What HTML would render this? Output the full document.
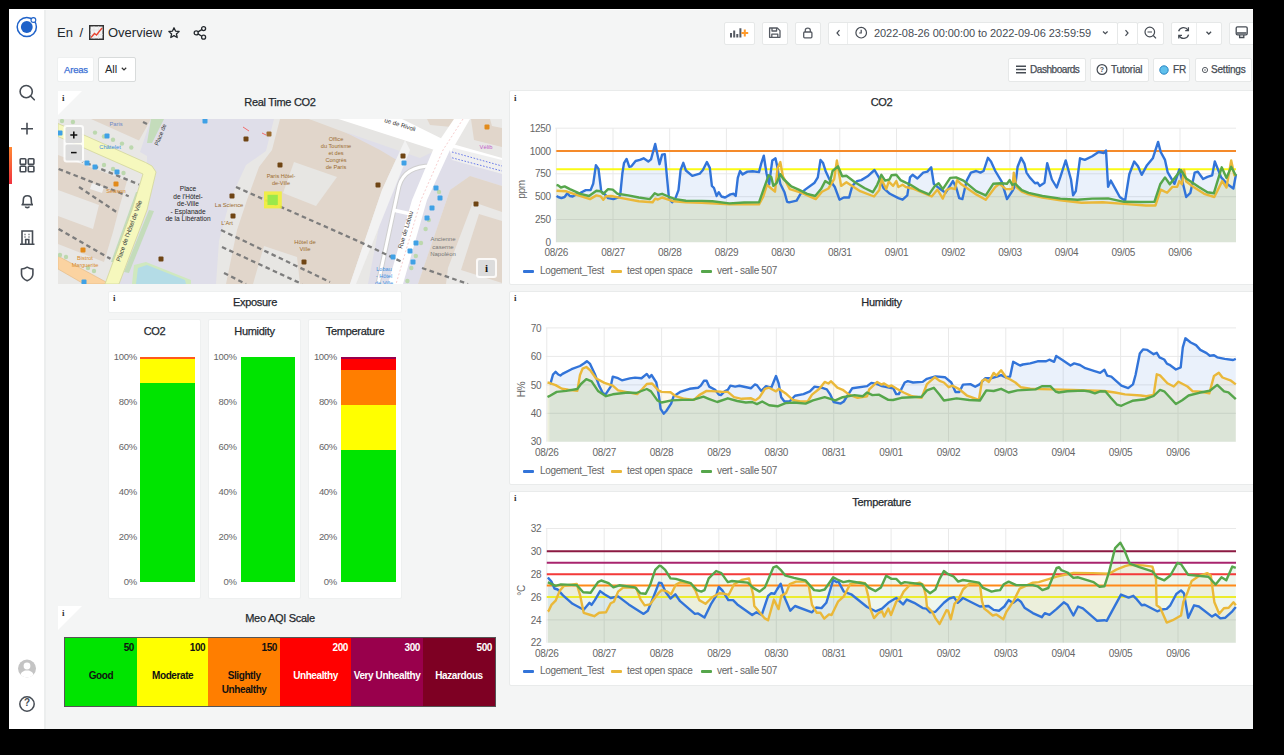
<!DOCTYPE html>
<html><head><meta charset="utf-8">
<style>
*{box-sizing:border-box;margin:0;padding:0}
html,body{width:1284px;height:755px;overflow:hidden;background:#f4f5f5;font-family:"Liberation Sans",sans-serif;color:#24292e}
.a{position:absolute}
.blk{position:absolute;background:#000}
.btn{position:absolute;background:#fff;border:1px solid #e6e8e8;border-radius:2px}
.pnl{position:absolute;background:#fff;border:1px solid #e9ebeb;border-radius:2px}
.ttl{position:absolute;font-size:11px;color:#24292e;text-align:center;white-space:nowrap;-webkit-text-stroke:0.25px #24292e;letter-spacing:-0.3px}
.tri{position:absolute;width:0;height:0;border-top:24px solid #fff;border-right:24px solid transparent}
.ii{position:absolute;font-family:"Liberation Serif",serif;font-weight:bold;font-size:9px;color:#333}
.yl{position:absolute;font-size:10px;color:#666;text-align:right;white-space:nowrap;letter-spacing:-0.3px}
.xl{position:absolute;font-size:10px;color:#666;white-space:nowrap;letter-spacing:-0.3px}
.lg{position:absolute;font-size:10px;color:#666;white-space:nowrap;letter-spacing:-0.35px}
.aq{position:absolute;font-size:10px;font-weight:bold;letter-spacing:-0.4px;white-space:nowrap}
.sb{position:absolute;left:0;width:35px;display:flex;justify-content:center}
</style></head><body>
<!-- sidebar -->
<div class="a" style="left:9px;top:9px;width:37px;height:720px;background:#fff;border-right:2px solid #eceeee"></div>
<div class="a" style="left:44px;top:9px;width:1209px;height:1px;background:#fff"></div>


<!-- sidebar icons -->
<svg class="a" style="left:9px;top:9px" width="35" height="720" viewBox="9 9 35 720" fill="none" stroke="#464c54" stroke-width="1.6">
<circle cx="26.8" cy="27" r="9.6" stroke="#1f62c9" stroke-width="1.5"/>
<circle cx="26.8" cy="27" r="5.9" fill="#1f62c9" stroke="none"/>
<circle cx="33.4" cy="20" r="2.4" fill="#fff" stroke="#1f62c9" stroke-width="1.1"/>
<circle cx="26.2" cy="91.6" r="6.1"/>
<path d="M30.6 96 L34.3 99.8" stroke-linecap="round"/>
<path d="M27 122.8 V134.6 M21 128.7 H33"/>
<rect x="20.2" y="158.8" width="5.6" height="5.6" rx="0.8"/>
<rect x="28.3" y="158.8" width="5.6" height="5.6" rx="0.8"/>
<rect x="20.2" y="166.2" width="5.6" height="5.6" rx="0.8"/>
<rect x="28.3" y="166.2" width="5.6" height="5.6" rx="0.8"/>
<path d="M22.5 204.5 C23.5 203 23.3 201 23.3 200 C23.3 197.5 25 195.8 27.3 195.8 C29.6 195.8 31.3 197.5 31.3 200 C31.3 201 31.1 203 32.2 204.5 Z M21.5 204.8 H33 M25.3 206.5 C25.8 208 28.8 208 29.3 206.5" stroke-linejoin="round"/>
<path d="M22 244 V231 H32.5 V244 M20 244.2 H34.5 M25.7 244 V239.5 H28.8 V244" />
<path d="M24.5 234.5h1 M28.5 234.5h1 M24.5 237h1 M28.5 237h1" stroke-width="1.4"/>
<path d="M27.2 267.2 C25 268.6 23 269 21.5 269 V274 C21.5 277.5 24 279.5 27.2 280.8 C30.4 279.5 32.9 277.5 32.9 274 V269 C31.4 269 29.4 268.6 27.2 267.2 Z" stroke-linejoin="round"/>
<circle cx="27" cy="668.5" r="9" fill="#c4c4c4" stroke="none"/>
<circle cx="27" cy="666" r="3.4" fill="#fff" stroke="none"/>
<path d="M20.5 674.5 C22 671 25 670.6 27 670.6 C29 670.6 32 671 33.5 674.5 C32 676.5 29.5 677.5 27 677.5 C24.5 677.5 22 676.5 20.5 674.5 Z" fill="#fff" stroke="none"/>
<circle cx="27" cy="704" r="7.2" stroke-width="1.5"/>
</svg>
<div class="a" style="left:23px;top:697px;width:8px;font-size:10px;font-weight:bold;color:#464c54;text-align:center">?</div>
<div class="a" style="left:9px;top:147px;width:3px;height:37px;background:linear-gradient(#ff8833,#f0333f)"></div>

<!-- header breadcrumb -->
<div class="a" style="left:57px;top:25px;font-size:13px;color:#24292e;white-space:nowrap">En</div>
<div class="a" style="left:79.5px;top:25px;font-size:13px;color:#24292e">/</div>
<svg class="a" style="left:89px;top:25px" width="15" height="15" viewBox="0 0 15 15">
<rect x="0.75" y="0.75" width="13.5" height="13.5" fill="#f4f4f4" stroke="#333" stroke-width="1.5"/>
<path d="M1 5H14 M1 9.5H14 M5 1V14 M9.5 1V14" stroke="#ddd" stroke-width="0.6"/>
<path d="M2 12.5 L5.5 8.5 L7.5 10 L13 3" fill="none" stroke="#e8432e" stroke-width="1.3"/>
</svg>
<div class="a" style="left:108px;top:25px;font-size:13px;color:#24292e;white-space:nowrap">Overview</div>
<svg class="a" style="left:166px;top:25px" width="16" height="16" viewBox="0 0 16 16"><path d="M8 2.8 L9.5 6.1 L13.1 6.5 L10.4 8.9 L11.2 12.5 L8 10.6 L4.8 12.5 L5.6 8.9 L2.9 6.5 L6.5 6.1 Z" fill="none" stroke="#24292e" stroke-width="1.3" stroke-linejoin="round"/></svg>
<svg class="a" style="left:192px;top:25px" width="16" height="16" viewBox="0 0 16 16" fill="none" stroke="#24292e" stroke-width="1.3"><circle cx="11.6" cy="3.6" r="2"/><circle cx="4.2" cy="7.9" r="2"/><circle cx="11.6" cy="12.2" r="2"/><path d="M6 6.9 L9.8 4.6 M6 8.9 L9.8 11.2"/></svg>

<!-- variables -->
<div class="btn" style="left:57px;top:57px;width:37px;height:25px;border-color:#eef0f0"></div>
<div class="a" style="left:57.5px;top:64px;width:37px;text-align:center;font-size:9.5px;color:#3b6fd4;-webkit-text-stroke:0.25px #3b6fd4;letter-spacing:-0.2px">Areas</div>
<div class="btn" style="left:98px;top:57px;width:38px;height:25px;border-color:#d8dbdb"></div>
<div class="a" style="left:105px;top:63px;font-size:11px;color:#24292e">All</div>
<svg class="a" style="left:120px;top:66px" width="8" height="6" viewBox="0 0 8 6"><path d="M1.8 1.8 L4 3.9 L6.2 1.8" fill="none" stroke="#333" stroke-width="1.2"/></svg>


<!-- top right toolbar -->
<div class="btn" style="left:724px;top:22px;width:31px;height:23px"></div>
<svg class="a" style="left:724px;top:22px" width="31" height="23" viewBox="724 22 31 23">
<path d="M731 37.5V33 M734.2 37.5V30.5 M737.3 37.5V34 M740.4 37.5V28.2" stroke="#555a62" stroke-width="2" fill="none"/>
<path d="M744.8 29.6V36.4 M741.4 33H748.2" stroke="#ff9a2a" stroke-width="2" fill="none"/>
</svg>
<div class="btn" style="left:762px;top:22px;width:26px;height:23px"></div>
<svg class="a" style="left:762px;top:22px" width="26" height="23" viewBox="762 22 26 23" fill="none" stroke="#555a62" stroke-width="1.3" stroke-linejoin="round">
<path d="M769.6 28 H777.3 L780 30.6 V37.3 H769.6 Z"/><path d="M772 28V31H776.6V28 M771.8 37.3V34.2H777.8V37.3"/>
</svg>
<div class="btn" style="left:795px;top:22px;width:26px;height:23px"></div>
<svg class="a" style="left:795px;top:22px" width="26" height="23" viewBox="795 22 26 23" fill="none" stroke="#555a62" stroke-width="1.3">
<rect x="803.7" y="32" width="8.2" height="5.8" rx="1"/><path d="M805.3 32V30.3C805.3 27.5 810.3 27.5 810.3 30.3V32"/>
</svg>
<div class="btn" style="left:828px;top:22px;width:290px;height:23px"></div>
<div class="btn" style="left:1117px;top:22px;width:21px;height:23px"></div>
<div class="btn" style="left:1137px;top:22px;width:27px;height:23px"></div>
<div class="btn" style="left:1229px;top:22px;width:30px;height:23px"></div>
<div class="a" style="left:847px;top:23px;width:1px;height:21px;background:#eceeee"></div>
<svg class="a" style="left:828px;top:22px" width="340" height="23" viewBox="828 22 340 23" fill="none" stroke="#464c54" stroke-width="1.2">
<path d="M839.5 30.2L837 33L839.5 35.8"/>
<circle cx="861.2" cy="32.7" r="5.3"/><path d="M861.2 29.8V33H859.2"/>
<path d="M1103 31.5L1105.3 33.7L1107.6 31.5"/>
<path d="M1125.5 30.2L1128 33L1125.5 35.8"/>
<circle cx="1149.8" cy="32" r="4.8"/><path d="M1147.5 32H1152 M1153.3 35.5L1156 38.3"/>
</svg>
<div class="a" style="left:874px;top:27px;font-size:11px;color:#464c54;white-space:nowrap;letter-spacing:-0.06px">2022-08-26 00:00:00 to 2022-09-06 23:59:59</div>
<div class="btn" style="left:1171px;top:22px;width:51px;height:23px"></div>
<div class="a" style="left:1196px;top:23px;width:1px;height:21px;background:#eceeee"></div>
<svg class="a" style="left:1171px;top:22px" width="82" height="23" viewBox="1171 22 82 23" fill="none" stroke="#464c54" stroke-width="1.3">
<path d="M1178.6 31.2 A5.2 5.2 0 0 1 1188 30.2 M1188.6 34.6 A5.2 5.2 0 0 1 1179 35.6"/>
<path d="M1188.4 27.3V30.6H1185.2 M1178.8 38.6V35.3H1182"/>
<path d="M1206.5 31.7L1208.8 34L1211.1 31.7"/>
<rect x="1236.2" y="26.8" width="11" height="8" rx="1.3"/><path d="M1237 33H1246.5 M1239.6 35V37.5H1243.8V35"/>
</svg>

<!-- second row -->
<div class="btn" style="left:1008px;top:58px;width:78px;height:24px"></div>
<svg class="a" style="left:1015px;top:64px" width="12" height="12" viewBox="0 0 12 12"><path d="M1 2.2H11 M1 5.5H11 M1 8.8H11" stroke="#464c54" stroke-width="1.4"/></svg>
<div class="a" style="left:1030px;top:64px;font-size:10px;color:#464c54;white-space:nowrap;letter-spacing:-0.45px;-webkit-text-stroke:0.25px #464c54">Dashboards</div>
<div class="btn" style="left:1090px;top:58px;width:59px;height:24px"></div>
<svg class="a" style="left:1096px;top:63px" width="12" height="13" viewBox="0 0 12 13"><circle cx="6" cy="6.5" r="4.9" fill="none" stroke="#464c54" stroke-width="1.2"/><text x="6" y="9.2" font-size="7" font-weight="bold" text-anchor="middle" fill="#464c54" font-family="Liberation Sans">?</text></svg>
<div class="a" style="left:1111px;top:64px;font-size:10px;color:#464c54;white-space:nowrap;letter-spacing:-0.2px;-webkit-text-stroke:0.25px #464c54">Tutorial</div>
<div class="btn" style="left:1153px;top:58px;width:37px;height:24px"></div>
<svg class="a" style="left:1158px;top:63px" width="12" height="13" viewBox="0 0 12 13"><circle cx="6" cy="7" r="4.2" fill="#5fc0ec" stroke="#2a86c4" stroke-width="1"/></svg>
<div class="a" style="left:1173px;top:64px;font-size:10px;color:#464c54;white-space:nowrap;letter-spacing:-0.2px;-webkit-text-stroke:0.25px #464c54">FR</div>
<div class="btn" style="left:1195px;top:58px;width:57px;height:24px"></div>
<svg class="a" style="left:1201px;top:65px" width="8" height="10" viewBox="0 0 8 10"><circle cx="4" cy="5" r="2.6" fill="none" stroke="#464c54" stroke-width="0.9"/><circle cx="4" cy="5" r="0.7" fill="#464c54"/></svg>
<div class="a" style="left:1211px;top:64px;font-size:10px;color:#464c54;white-space:nowrap;letter-spacing:-0.2px;-webkit-text-stroke:0.25px #464c54">Settings</div>


<!-- map panel title -->
<div class="tri" style="left:58px;top:91px"></div>
<div class="ii" style="left:62px;top:93px">i</div>
<div class="ttl" style="left:180px;top:96px;width:200px">Real Time CO2</div>
<!-- MAP -->
<svg class="a" style="left:58px;top:119px" width="444" height="165" viewBox="58 119 444 165">
<defs><clipPath id="mc"><rect x="58" y="119" width="444" height="165"/></clipPath></defs><g clip-path="url(#mc)">
<rect x="58" y="119" width="444" height="165" fill="#e8e7e5"/>
<polygon points="91,119 151,119 139,140.5" fill="#e1d6cb" />
<polygon points="58,155 127,181 120,205 113,232 104,262 58,244" fill="#e1d6cb" />
<polygon points="58,190 99,205 93,229 58,216" fill="#e9e8e6" />
<polygon points="92,183 104,187 102,193 90,189" fill="#eeeeee" />
<polygon points="58,256 106,282 106,284 84,284 58,269" fill="#fbd3a1" stroke="#e2b77f" stroke-width="0.6"/>
<polygon points="151,119 274,119 266,151 246,165 230,200 219,241 216,284 119,284 147,210 156,172 147,163 147,156 140,152" fill="#dfdee9" />
<polygon points="151,119 164,119 152,143 147,143" fill="#c4dcbb" />
<polygon points="136,192 140,192 115,262 111,262" fill="#c4dcbb" />
<polygon points="149,210 154,211 129,273 124,272" fill="#c4dcbb" />
<polygon points="58,123.5 145.6,162.5 152,166 156,172 147,210 119,284 105,284 132,210 143,174 58,136.5" fill="#f6f8bd" stroke="#d2d59a" stroke-width="0.8"/>
<polygon points="134,265 146,262 191,280 191,284 132,284" fill="#cfe8bf" />
<polygon points="138,268 147,265 185,280 186,284 136,284" fill="#b4dce6" />
<polygon points="280,119 309,119 405,140 382,190 350,284 226,284 237,230 247,200 259,167 272,150" fill="#e1d6cb" />
<polygon points="294,162 337,177 316,206 283,193" fill="#e7e6e3" />
<polygon points="264,246 297,257 300,284 253,284" fill="#e7e6e3" />
<polygon points="318,190 324,192 322,197 316,195" fill="#e7e6e3" />
<polygon points="309,119 340,119 434.5,150 425,160 405,155" fill="#e6e5e3" />
<polygon points="345,132 420,158 437,150 430,165 415,200 390,284 368,284 386,190 400,162 380,150" fill="#dfdee9" />
<path d="M432 166 C414 166 403 172 399 186 L378 284" stroke="#cfcfcf" stroke-width="5" fill="none"/><path d="M432 166 C414 166 403 172 399 186 L378 284" stroke="#fff" stroke-width="3" fill="none"/><path d="M393 210 L420 216" stroke="#fff" stroke-width="3.5"/>
<polygon points="405,140 410,150 356,284 350,284 382,190" fill="#f2f2f2" />
<polygon points="330,117 402,119 452.6,144 502,158 502,166 434.5,150 340,119.5" fill="#ffffff" />
<polygon points="427,119 454,119 452,127 430,125" fill="#e1d6cb" />
<polygon points="471,119 502,119 502,147 474,140" fill="#e1d6cb" />
<polygon points="490,119 502,119 502,128 492,126" fill="#e9e8e6" />
<polygon points="450,147 502,160 502,174 446,160" fill="#efefef" />
<path d="M452 152 L502 166 M449 157 L502 171" stroke="#5b6ee8" stroke-width="0.9" stroke-dasharray="1.6 1.6" fill="none"/>
<polygon points="454,119 470,119 452,150 430,200 406,284 388,284 412,200 433,150" fill="#ffffff" />
<path d="M463 119 L443 150 L421 200 L396 284" stroke="#f2b9b9" stroke-width="0.7" stroke-dasharray="2 2" fill="none"/>
<polygon points="452,160 502,174 502,186 470,176 450,190 418,284 403,284 427,200 450,150" fill="#dfdee9" />
<polygon points="470,176 502,186 502,284 418,284 450,190" fill="#e1d6cb" />
<polygon points="473,202 502,212 502,221 479,214 461,270 502,283 502,284 446,284 448,268" fill="#e9e8e6" />
<g stroke="#7d7d7d" stroke-width="2.3" stroke-dasharray="4.6 3.4" fill="none">
<path d="M236 187 L360 242 L402 262"/>
<path d="M221 230 L330 282"/>
<path d="M222 247 L302 284"/>
<path d="M224 273 L246 284"/>
<path d="M79 160 L139 184.5"/>
<path d="M58.6 169 L128.7 196.2"/>
<path d="M79 187 L118 213"/>
<path d="M58.6 229 L110.5 258.8"/>
<path d="M143 122 L147 124"/>
<path d="M422 268 L468 284"/>
</g>
<circle cx="72.9" cy="122" r="2.2" fill="#bcd8ae"/>
<circle cx="95" cy="132.6" r="2.2" fill="#bcd8ae"/>
<circle cx="104" cy="136.5" r="2.2" fill="#bcd8ae"/>
<circle cx="113" cy="139.7" r="2.2" fill="#bcd8ae"/>
<circle cx="122" cy="143.6" r="2.2" fill="#bcd8ae"/>
<circle cx="131.3" cy="147.5" r="2.2" fill="#bcd8ae"/>
<circle cx="104" cy="165" r="2.2" fill="#bcd8ae"/>
<circle cx="113" cy="169" r="2.2" fill="#bcd8ae"/>
<circle cx="123.5" cy="173" r="2.2" fill="#bcd8ae"/>
<circle cx="60" cy="255" r="2.2" fill="#bcd8ae"/>
<circle cx="66" cy="257" r="2.2" fill="#bcd8ae"/>
<circle cx="88" cy="268" r="2.2" fill="#bcd8ae"/>
<circle cx="94" cy="271" r="2.2" fill="#bcd8ae"/>
<circle cx="439" cy="192" r="2.2" fill="#bcd8ae"/>
<circle cx="428.8" cy="220" r="2.2" fill="#bcd8ae"/>
<circle cx="425.6" cy="229" r="2.2" fill="#bcd8ae"/>
<circle cx="421" cy="243" r="2.2" fill="#bcd8ae"/>
<circle cx="415.8" cy="256" r="2.2" fill="#bcd8ae"/>
<circle cx="411.3" cy="268" r="2.2" fill="#bcd8ae"/>
<circle cx="407.4" cy="281" r="2.2" fill="#bcd8ae"/>
<circle cx="62" cy="121" r="2.2" fill="#bcd8ae"/>
<rect x="264" y="191.4" width="17.8" height="17" fill="#f1ef3a" fill-opacity="0.9"/>
<rect x="267.5" y="194.8" width="10.3" height="10.2" fill="#9be84a"/>
<text x="188" y="191.0" fill="#222" font-size="6.6" text-anchor="middle" font-family="Liberation Sans">Place</text>
<text x="188" y="198.5" fill="#222" font-size="6.6" text-anchor="middle" font-family="Liberation Sans">de l'Hôtel-</text>
<text x="188" y="206.0" fill="#222" font-size="6.6" text-anchor="middle" font-family="Liberation Sans">de-Ville</text>
<text x="188" y="213.5" fill="#222" font-size="6.6" text-anchor="middle" font-family="Liberation Sans">- Esplanade</text>
<text x="188" y="221.0" fill="#222" font-size="6.6" text-anchor="middle" font-family="Liberation Sans">de la Libération</text>
<text x="229" y="207" fill="#9b6b2e" font-size="5.8" text-anchor="middle" font-family="Liberation Sans">La Science</text>
<text x="227" y="225" fill="#9b6b2e" font-size="5.8" text-anchor="middle" font-family="Liberation Sans">L'Art</text>
<text x="281" y="178" fill="#9b6b2e" font-size="5.5" text-anchor="middle" font-family="Liberation Sans">Paris Hôtel-</text>
<text x="281" y="185" fill="#9b6b2e" font-size="5.5" text-anchor="middle" font-family="Liberation Sans">de-Ville</text>
<text x="336" y="141" fill="#9b6b2e" font-size="5.6" text-anchor="middle" font-family="Liberation Sans">Office</text>
<text x="336" y="148" fill="#9b6b2e" font-size="5.6" text-anchor="middle" font-family="Liberation Sans">du Tourisme</text>
<text x="336" y="155" fill="#9b6b2e" font-size="5.6" text-anchor="middle" font-family="Liberation Sans">et des</text>
<text x="336" y="162" fill="#9b6b2e" font-size="5.6" text-anchor="middle" font-family="Liberation Sans">Congrès</text>
<text x="336" y="169" fill="#9b6b2e" font-size="5.6" text-anchor="middle" font-family="Liberation Sans">de Paris</text>
<text x="305" y="244" fill="#9b6b2e" font-size="5.8" text-anchor="middle" font-family="Liberation Sans">Hôtel de</text>
<text x="305" y="251" fill="#9b6b2e" font-size="5.8" text-anchor="middle" font-family="Liberation Sans">Ville</text>
<text x="443" y="241.0" fill="#777" font-size="6" text-anchor="middle" font-family="Liberation Sans">Ancienne</text>
<text x="443" y="248.5" fill="#777" font-size="6" text-anchor="middle" font-family="Liberation Sans">caserne</text>
<text x="443" y="256.0" fill="#777" font-size="6" text-anchor="middle" font-family="Liberation Sans">Napoléon</text>
<text x="110" y="149" fill="#3b8ee0" font-size="5.8" text-anchor="middle" font-family="Liberation Sans">Châtelet</text>
<text x="116" y="126" fill="#6d88c8" font-size="5.8" text-anchor="middle" font-family="Liberation Sans">Paris</text>
<text x="116" y="193" fill="#d88a2a" font-size="5.8" text-anchor="middle" font-family="Liberation Sans">Season</text>
<text x="85" y="260" fill="#d88a2a" font-size="5.6" text-anchor="middle" font-family="Liberation Sans">Bistrot</text>
<text x="85" y="267" fill="#d88a2a" font-size="5.6" text-anchor="middle" font-family="Liberation Sans">Marguerite</text>
<text x="384" y="271" fill="#3b8ee0" font-size="5.6" text-anchor="middle" font-family="Liberation Sans">Lobau</text>
<text x="384" y="278" fill="#3b8ee0" font-size="5.6" text-anchor="middle" font-family="Liberation Sans">- Hôtel</text>
<text x="384" y="285" fill="#3b8ee0" font-size="5.6" text-anchor="middle" font-family="Liberation Sans">de Ville</text>
<text x="486" y="149" fill="#c05bc8" font-size="5.8" text-anchor="middle" font-family="Liberation Sans">Vélib</text>
<text x="0" y="0" fill="#333" font-size="6.2" font-family="Liberation Sans" transform="translate(120,262) rotate(-70)">Place de l'Hôtel de Ville</text>
<text x="0" y="0" fill="#333" font-size="6.2" font-family="Liberation Sans" transform="translate(402,249) rotate(-73)">Rue de Lobau</text>
<text x="0" y="0" fill="#333" font-size="6.2" font-family="Liberation Sans" transform="translate(384,122) rotate(17)">ue de Rivoli</text>
<text x="0" y="0" fill="#333" font-size="5.8" font-family="Liberation Sans" transform="translate(158,146) rotate(-68)">Place de</text>
<rect x="266.5" y="131.5" width="5" height="5" rx="1" fill="#9b6b2e"/>
<rect x="277.5" y="162.5" width="5" height="5" rx="1" fill="#6f4514"/>
<rect x="301.5" y="259.5" width="5" height="5" rx="1" fill="#6f4514"/>
<rect x="243.5" y="136.5" width="5" height="5" rx="1" fill="#6f4514"/>
<rect x="229.5" y="193.5" width="5" height="5" rx="1" fill="#6f4514"/>
<rect x="230.5" y="213.5" width="5" height="5" rx="1" fill="#6f4514"/>
<rect x="158.5" y="256.5" width="5" height="5" rx="1" fill="#6f4514"/>
<rect x="375.5" y="182.5" width="5" height="5" rx="1" fill="#6f4514"/>
<rect x="400.5" y="153.5" width="5" height="5" rx="1" fill="#6f4514"/>
<rect x="484.5" y="124.5" width="5" height="5" rx="1" fill="#e28a1a"/>
<rect x="473.5" y="201.5" width="5" height="5" rx="1" fill="#6f4514"/>
<rect x="113.5" y="181.5" width="5" height="5" rx="1" fill="#e28a1a"/>
<rect x="80.5" y="247.5" width="5" height="5" rx="1" fill="#e28a1a"/>
<rect x="57.5" y="130.5" width="5" height="5" rx="1" fill="#3fa1e6"/>
<rect x="84.5" y="160.5" width="5" height="5" rx="1" fill="#3fa1e6"/>
<rect x="92.5" y="164.5" width="5" height="5" rx="1" fill="#3fa1e6"/>
<rect x="114.5" y="169.5" width="5" height="5" rx="1" fill="#3fa1e6"/>
<rect x="104.5" y="133.5" width="5" height="5" rx="1" fill="#3fa1e6"/>
<rect x="433.5" y="185.5" width="5" height="5" rx="1" fill="#3fa1e6"/>
<rect x="437.5" y="195.5" width="5" height="5" rx="1" fill="#3fa1e6"/>
<rect x="429.5" y="205.5" width="5" height="5" rx="1" fill="#3fa1e6"/>
<rect x="424.5" y="215.5" width="5" height="5" rx="1" fill="#3fa1e6"/>
<rect x="413.5" y="240.5" width="5" height="5" rx="1" fill="#3fa1e6"/>
<rect x="407.5" y="248.5" width="5" height="5" rx="1" fill="#3fa1e6"/>
<rect x="410.5" y="259.5" width="5" height="5" rx="1" fill="#3fa1e6"/>
<rect x="390.5" y="254.5" width="5" height="5" rx="1" fill="#3fa1e6"/>
<rect x="81.5" y="279.5" width="5" height="5" rx="1" fill="#3fa1e6"/>
<rect x="202.5" y="118.5" width="5" height="5" rx="1" fill="#3fa1e6"/>
<rect x="401.5" y="160.5" width="5" height="5" rx="1" fill="#3fa1e6"/>
<path d="M243 127 L249 131 M262 133 L266 135" stroke="#f36b6b" stroke-width="1"/>
</g>
<rect x="63.5" y="125" width="20.5" height="37.6" rx="3" fill="#ffffff" fill-opacity="0.85"/>
<rect x="65.5" y="127" width="16.5" height="16" rx="1.5" fill="#dcdcdc"/>
<rect x="65.5" y="144.6" width="16.5" height="16" rx="1.5" fill="#dcdcdc"/>
<path d="M73.8 131.5V138.5 M70.3 135H77.3" stroke="#111" stroke-width="1.6"/>
<path d="M71 152.6H76.6" stroke="#111" stroke-width="1.5"/>
<rect x="476" y="258" width="21" height="20" rx="3" fill="#ffffff" fill-opacity="0.85"/>
<rect x="478" y="260" width="17" height="16" rx="1.5" fill="#dcdcdc"/>
<text x="486.5" y="272" fill="#111" font-size="11" font-weight="bold" text-anchor="middle" font-family="Liberation Serif">i</text>
</svg>
<!-- /MAP -->

<!-- exposure -->
<div class="pnl" style="left:108px;top:291px;width:294px;height:22px;border-color:#eef0f0"></div>
<div class="ii" style="left:113px;top:293px">i</div>
<div class="ttl" style="left:155px;top:296px;width:200px">Exposure</div>
<div class="pnl" style="left:108px;top:319px;width:93px;height:280px;border-color:#eef0f0"></div>
<div class="pnl" style="left:208px;top:319px;width:93px;height:280px;border-color:#eef0f0"></div>
<div class="pnl" style="left:308px;top:319px;width:94px;height:280px;border-color:#eef0f0"></div>
<div class="ttl" style="left:108px;top:325px;width:93px">CO2</div>
<div class="ttl" style="left:208px;top:325px;width:93px">Humidity</div>
<div class="ttl" style="left:308px;top:325px;width:94px">Temperature</div>
<!-- CO2 bar -->
<div class="a" style="left:140.4px;top:357px;width:54.6px;height:1.5px;background:#ff5a1a"></div>
<div class="a" style="left:140.4px;top:358.5px;width:54.6px;height:24.5px;background:#ffff00"></div>
<div class="a" style="left:140.4px;top:383px;width:54.6px;height:198.7px;background:#00e400"></div>
<!-- Humidity bar -->
<div class="a" style="left:240.9px;top:357px;width:54.4px;height:224.7px;background:#00e400"></div>
<!-- Temp bar -->
<div class="a" style="left:341px;top:357px;width:54.8px;height:1.5px;background:#99004c"></div>
<div class="a" style="left:341px;top:358.5px;width:54.8px;height:11.5px;background:#ff0000"></div>
<div class="a" style="left:341px;top:370px;width:54.8px;height:35px;background:#ff7e00"></div>
<div class="a" style="left:341px;top:405px;width:54.8px;height:44.7px;background:#ffff00"></div>
<div class="a" style="left:341px;top:449.7px;width:54.8px;height:132px;background:#00e400"></div>
<div class="yl" style="left:96.8px;top:351.0px;width:40px;font-size:9.5px">100%</div>
<div class="yl" style="left:96.8px;top:395.9px;width:40px;font-size:9.5px">80%</div>
<div class="yl" style="left:96.8px;top:440.9px;width:40px;font-size:9.5px">60%</div>
<div class="yl" style="left:96.8px;top:485.8px;width:40px;font-size:9.5px">40%</div>
<div class="yl" style="left:96.8px;top:530.8px;width:40px;font-size:9.5px">20%</div>
<div class="yl" style="left:96.8px;top:575.7px;width:40px;font-size:9.5px">0%</div>
<div class="yl" style="left:196.7px;top:351.0px;width:40px;font-size:9.5px">100%</div>
<div class="yl" style="left:196.7px;top:395.9px;width:40px;font-size:9.5px">80%</div>
<div class="yl" style="left:196.7px;top:440.9px;width:40px;font-size:9.5px">60%</div>
<div class="yl" style="left:196.7px;top:485.8px;width:40px;font-size:9.5px">40%</div>
<div class="yl" style="left:196.7px;top:530.8px;width:40px;font-size:9.5px">20%</div>
<div class="yl" style="left:196.7px;top:575.7px;width:40px;font-size:9.5px">0%</div>
<div class="yl" style="left:297.0px;top:351.0px;width:40px;font-size:9.5px">100%</div>
<div class="yl" style="left:297.0px;top:395.9px;width:40px;font-size:9.5px">80%</div>
<div class="yl" style="left:297.0px;top:440.9px;width:40px;font-size:9.5px">60%</div>
<div class="yl" style="left:297.0px;top:485.8px;width:40px;font-size:9.5px">40%</div>
<div class="yl" style="left:297.0px;top:530.8px;width:40px;font-size:9.5px">20%</div>
<div class="yl" style="left:297.0px;top:575.7px;width:40px;font-size:9.5px">0%</div>

<!-- AQI -->
<div class="tri" style="left:58px;top:606px"></div>
<div class="ii" style="left:62px;top:608px">i</div>
<div class="ttl" style="left:180px;top:612px;width:200px">Meo AQI Scale</div>
<div class="a" style="left:64px;top:637px;width:432px;height:70px;border:1px solid #555;background:#555"></div>
<div class="a" style="left:65px;top:638px;width:72.0px;height:68px;background:#00e400"></div>
<div class="aq" style="left:65px;top:642px;width:69.0px;text-align:right;color:#111">50</div>
<div class="aq" style="left:65px;top:669px;width:72.0px;text-align:center;color:#111;line-height:14px">Good</div>
<div class="a" style="left:137px;top:638px;width:71.3px;height:68px;background:#ffff00"></div>
<div class="aq" style="left:137px;top:642px;width:68.3px;text-align:right;color:#111">100</div>
<div class="aq" style="left:137px;top:669px;width:71.3px;text-align:center;color:#111;line-height:14px">Moderate</div>
<div class="a" style="left:208.3px;top:638px;width:71.7px;height:68px;background:#ff7e00"></div>
<div class="aq" style="left:208.3px;top:642px;width:68.7px;text-align:right;color:#111">150</div>
<div class="aq" style="left:208.3px;top:669px;width:71.7px;text-align:center;color:#111;line-height:14px">Slightly<br>Unhealthy</div>
<div class="a" style="left:280px;top:638px;width:71.0px;height:68px;background:#ff0000"></div>
<div class="aq" style="left:280px;top:642px;width:68.0px;text-align:right;color:#fff">200</div>
<div class="aq" style="left:280px;top:669px;width:71.0px;text-align:center;color:#fff;line-height:14px">Unhealthy</div>
<div class="a" style="left:351px;top:638px;width:72.0px;height:68px;background:#99004c"></div>
<div class="aq" style="left:351px;top:642px;width:69.0px;text-align:right;color:#fff">300</div>
<div class="aq" style="left:351px;top:669px;width:72.0px;text-align:center;color:#fff;line-height:14px">Very Unhealthy</div>
<div class="a" style="left:423px;top:638px;width:72.0px;height:68px;background:#7e0023"></div>
<div class="aq" style="left:423px;top:642px;width:69.0px;text-align:right;color:#fff">500</div>
<div class="aq" style="left:423px;top:669px;width:72.0px;text-align:center;color:#fff;line-height:14px">Hazardous</div>

<!-- CHARTS -->
<div class="pnl" style="left:509px;top:90px;width:750px;height:195px"></div>
<div class="ii" style="left:514px;top:92.5px">i</div>
<div class="ttl" style="left:780px;top:95.6px;width:203px">CO2</div>
<svg class="a" style="left:509px;top:91px" width="744" height="193" viewBox="509 91 744 193">
<path d="M555.3 219.5H1236 M555.3 196.7H1236 M555.3 173.8H1236 M555.3 151.0H1236 M555.3 128.2H1236 M556.3 128.2V242.3 M613.0 128.2V242.3 M669.7 128.2V242.3 M726.4 128.2V242.3 M783.1 128.2V242.3 M839.8 128.2V242.3 M896.5 128.2V242.3 M953.2 128.2V242.3 M1009.9 128.2V242.3 M1066.6 128.2V242.3 M1123.3 128.2V242.3 M1180.0 128.2V242.3" stroke="#e9e9e9" stroke-width="1" fill="none"/>
<path d="M556.5 196.0 L558.2 197.0 L561.4 198.1 L564.6 197.0 L567.3 193.3 L569.9 196.0 L572.6 196.5 L575.2 194.9 L580.5 192.8 L585.8 190.1 L590.6 190.1 L593.2 183.8 L595.9 165.2 L598.5 168.9 L601.2 191.2 L604.9 194.4 L608.1 198.1 L613.4 199.1 L619.2 197.0 L620.3 194.4 L622.4 173.2 L624.0 163.1 L626.6 158.9 L629.3 166.8 L631.4 166.3 L635.6 161.0 L639.9 159.9 L643.6 158.3 L648.3 161.5 L651.0 159.4 L655.2 144.0 L659.5 164.2 L662.1 154.6 L664.8 154.1 L669.0 198.6 L672.2 202.3 L675.3 198.6 L678.5 190.1 L680.6 170.0 L683.3 162.8 L685.9 170.5 L692.3 175.8 L699.7 173.7 L702.9 170.0 L706.9 162.0 L709.8 167.9 L711.9 185.9 L714.0 188.0 L716.6 196.0 L718.8 192.2 L721.4 196.5 L725.1 197.5 L730.4 194.4 L733.6 193.8 L735.7 196.0 L737.8 177.9 L740.0 171.0 L742.6 174.4 L747.4 171.6 L752.7 171.3 L759.0 172.1 L761.2 163.6 L763.8 155.7 L766.5 173.2 L769.1 184.3 L772.3 160.4 L775.5 158.3 L777.1 165.7 L780.3 183.8 L784.5 192.2 L787.1 201.8 L789.2 202.3 L796.6 200.7 L800.8 193.3 L805.1 189.6 L814.6 182.7 L817.8 177.4 L820.5 159.9 L823.1 163.1 L825.8 171.6 L829.5 179.5 L834.8 187.0 L839.5 199.7 L843.8 197.5 L849.1 197.5 L852.3 185.9 L857.0 181.1 L861.3 180.1 L867.6 176.3 L874.5 170.0 L878.2 176.3 L883.5 188.0 L889.9 193.8 L898.4 198.1 L902.6 199.7 L907.3 195.4 L910.0 177.4 L912.6 174.8 L917.4 178.5 L923.2 172.6 L927.4 171.6 L931.2 167.3 L933.8 183.8 L940.2 189.1 L945.5 192.8 L952.9 181.1 L956.1 187.0 L959.2 198.1 L962.4 199.1 L966.7 180.6 L970.9 172.6 L976.2 171.0 L980.4 172.6 L983.6 171.0 L987.9 157.8 L991.0 161.5 L995.3 171.0 L1001.7 181.6 L1007.0 199.1 L1012.3 191.2 L1015.3 185.4 L1017.6 166.8 L1021.2 157.8 L1024.4 163.6 L1026.5 172.6 L1029.7 177.4 L1035.0 183.2 L1037.6 182.7 L1039.7 185.9 L1044.5 182.7 L1047.2 163.1 L1051.9 179.5 L1056.7 187.5 L1060.4 176.9 L1065.7 160.4 L1071.0 179.5 L1073.1 195.4 L1075.8 191.2 L1080.0 158.3 L1084.8 159.9 L1092.2 156.2 L1098.6 152.0 L1103.9 153.0 L1106.0 150.4 L1108.1 186.9 L1110.8 180.6 L1115.5 189.1 L1119.8 197.0 L1125.1 200.7 L1129.3 174.2 L1134.2 161.5 L1138.0 166.3 L1141.7 174.8 L1147.0 165.2 L1152.8 158.3 L1158.1 141.9 L1160.7 152.0 L1165.0 159.9 L1167.6 172.1 L1174.5 183.8 L1179.3 169.5 L1183.0 183.8 L1186.2 197.0 L1190.4 192.8 L1194.7 172.6 L1197.8 171.6 L1203.1 179.0 L1207.4 176.9 L1212.2 175.3 L1214.8 161.5 L1221.2 177.4 L1227.5 184.3 L1233.4 188.5 L1236.0 174.2 L1236.0 242.3 L556.5 242.3 Z" fill="#3274d9" fill-opacity="0.1" stroke="none"/>
<path d="M556.5 190.7 L565.7 191.2 L575.2 194.4 L590.0 199.1 L596.4 195.4 L600.6 196.3 L603.3 199.7 L606.0 196.3 L611.2 196.0 L621.8 198.1 L638.8 201.3 L652.6 202.3 L655.2 198.6 L657.9 199.5 L662.1 197.5 L673.8 201.3 L685.9 202.3 L701.8 202.8 L729.4 204.4 L759.0 204.4 L763.3 196.5 L767.0 184.8 L770.7 188.0 L775.0 191.7 L777.6 167.9 L780.3 162.0 L782.9 176.3 L789.8 189.1 L801.9 192.8 L815.7 199.1 L822.0 191.7 L828.4 188.5 L834.2 179.0 L836.9 160.4 L841.1 185.9 L846.4 182.2 L860.2 191.2 L874.0 196.5 L879.3 190.1 L881.4 179.0 L886.2 189.1 L888.8 181.6 L893.1 185.9 L896.3 181.1 L898.4 187.0 L902.6 184.8 L905.8 187.0 L912.6 188.5 L931.7 196.5 L937.5 189.6 L942.8 198.6 L946.5 190.1 L950.8 188.0 L955.0 189.1 L957.1 180.1 L961.4 184.3 L976.2 194.4 L985.7 199.7 L995.3 187.0 L999.5 183.8 L1005.9 189.1 L1012.3 189.1 L1013.8 172.6 L1016.5 187.0 L1021.8 191.7 L1028.6 194.4 L1042.4 197.5 L1060.4 200.2 L1081.6 202.8 L1102.8 202.3 L1124.0 203.9 L1130.0 204.4 L1145.9 205.5 L1155.4 205.5 L1160.7 189.6 L1167.1 192.8 L1172.4 186.9 L1177.2 186.9 L1179.3 181.1 L1181.9 184.3 L1184.1 170.0 L1186.2 181.6 L1193.6 186.9 L1204.2 193.8 L1214.3 197.0 L1222.2 181.1 L1226.5 187.5 L1231.2 160.4 L1234.4 175.3 L1236.0 174.2 L1236.0 242.3 L556.5 242.3 Z" fill="#eab839" fill-opacity="0.1" stroke="none"/>
<path d="M556.5 185.0 L558.2 185.4 L560.9 187.5 L564.6 186.4 L569.9 189.1 L580.5 193.8 L589.0 196.0 L596.4 190.7 L600.6 191.2 L603.3 193.8 L608.1 189.1 L612.8 189.6 L617.6 193.8 L628.2 195.4 L638.8 197.5 L649.9 199.1 L654.7 193.3 L657.9 194.9 L662.1 193.8 L668.5 196.5 L675.3 199.1 L685.9 200.7 L701.8 200.9 L712.4 201.3 L729.4 203.4 L744.2 202.5 L759.0 202.3 L763.3 190.1 L768.6 175.3 L771.2 176.9 L773.4 185.9 L776.5 183.2 L780.3 174.2 L783.4 179.0 L791.3 186.4 L798.7 189.6 L807.2 193.8 L815.2 196.0 L821.0 189.1 L825.2 181.1 L829.5 183.8 L832.6 171.0 L838.0 166.3 L842.2 176.3 L846.4 175.8 L854.9 182.2 L864.4 188.0 L872.9 192.2 L877.2 184.8 L881.4 174.8 L885.1 180.6 L889.4 179.5 L891.5 175.3 L896.3 174.8 L900.5 180.1 L905.8 182.7 L910.5 184.8 L919.0 190.1 L929.0 194.4 L934.9 185.9 L938.6 183.2 L942.8 189.1 L950.2 177.9 L956.1 177.4 L963.5 180.6 L976.2 191.2 L985.7 195.4 L993.2 183.8 L1001.7 183.2 L1007.0 183.8 L1009.6 180.1 L1012.3 184.8 L1015.3 183.8 L1021.8 190.1 L1028.6 192.8 L1042.4 196.0 L1060.4 198.6 L1077.4 199.7 L1092.2 198.6 L1108.1 198.4 L1124.0 201.8 L1140.6 202.0 L1154.4 201.8 L1160.2 184.3 L1165.0 177.4 L1169.8 184.3 L1180.9 170.0 L1186.2 178.5 L1198.9 186.9 L1207.4 192.2 L1213.8 193.3 L1221.7 167.3 L1226.5 177.9 L1231.2 166.8 L1236.0 175.8 L1236.0 242.3 L556.5 242.3 Z" fill="#56a64b" fill-opacity="0.1" stroke="none"/>
<path d="M556.3 151.0H1236" stroke="#f58a2a" stroke-width="2"/>
<path d="M556.3 169.3H1236" stroke="#fafa14" stroke-width="2"/>
<path d="M556.5 196.0 L558.2 197.0 L561.4 198.1 L564.6 197.0 L567.3 193.3 L569.9 196.0 L572.6 196.5 L575.2 194.9 L580.5 192.8 L585.8 190.1 L590.6 190.1 L593.2 183.8 L595.9 165.2 L598.5 168.9 L601.2 191.2 L604.9 194.4 L608.1 198.1 L613.4 199.1 L619.2 197.0 L620.3 194.4 L622.4 173.2 L624.0 163.1 L626.6 158.9 L629.3 166.8 L631.4 166.3 L635.6 161.0 L639.9 159.9 L643.6 158.3 L648.3 161.5 L651.0 159.4 L655.2 144.0 L659.5 164.2 L662.1 154.6 L664.8 154.1 L669.0 198.6 L672.2 202.3 L675.3 198.6 L678.5 190.1 L680.6 170.0 L683.3 162.8 L685.9 170.5 L692.3 175.8 L699.7 173.7 L702.9 170.0 L706.9 162.0 L709.8 167.9 L711.9 185.9 L714.0 188.0 L716.6 196.0 L718.8 192.2 L721.4 196.5 L725.1 197.5 L730.4 194.4 L733.6 193.8 L735.7 196.0 L737.8 177.9 L740.0 171.0 L742.6 174.4 L747.4 171.6 L752.7 171.3 L759.0 172.1 L761.2 163.6 L763.8 155.7 L766.5 173.2 L769.1 184.3 L772.3 160.4 L775.5 158.3 L777.1 165.7 L780.3 183.8 L784.5 192.2 L787.1 201.8 L789.2 202.3 L796.6 200.7 L800.8 193.3 L805.1 189.6 L814.6 182.7 L817.8 177.4 L820.5 159.9 L823.1 163.1 L825.8 171.6 L829.5 179.5 L834.8 187.0 L839.5 199.7 L843.8 197.5 L849.1 197.5 L852.3 185.9 L857.0 181.1 L861.3 180.1 L867.6 176.3 L874.5 170.0 L878.2 176.3 L883.5 188.0 L889.9 193.8 L898.4 198.1 L902.6 199.7 L907.3 195.4 L910.0 177.4 L912.6 174.8 L917.4 178.5 L923.2 172.6 L927.4 171.6 L931.2 167.3 L933.8 183.8 L940.2 189.1 L945.5 192.8 L952.9 181.1 L956.1 187.0 L959.2 198.1 L962.4 199.1 L966.7 180.6 L970.9 172.6 L976.2 171.0 L980.4 172.6 L983.6 171.0 L987.9 157.8 L991.0 161.5 L995.3 171.0 L1001.7 181.6 L1007.0 199.1 L1012.3 191.2 L1015.3 185.4 L1017.6 166.8 L1021.2 157.8 L1024.4 163.6 L1026.5 172.6 L1029.7 177.4 L1035.0 183.2 L1037.6 182.7 L1039.7 185.9 L1044.5 182.7 L1047.2 163.1 L1051.9 179.5 L1056.7 187.5 L1060.4 176.9 L1065.7 160.4 L1071.0 179.5 L1073.1 195.4 L1075.8 191.2 L1080.0 158.3 L1084.8 159.9 L1092.2 156.2 L1098.6 152.0 L1103.9 153.0 L1106.0 150.4 L1108.1 186.9 L1110.8 180.6 L1115.5 189.1 L1119.8 197.0 L1125.1 200.7 L1129.3 174.2 L1134.2 161.5 L1138.0 166.3 L1141.7 174.8 L1147.0 165.2 L1152.8 158.3 L1158.1 141.9 L1160.7 152.0 L1165.0 159.9 L1167.6 172.1 L1174.5 183.8 L1179.3 169.5 L1183.0 183.8 L1186.2 197.0 L1190.4 192.8 L1194.7 172.6 L1197.8 171.6 L1203.1 179.0 L1207.4 176.9 L1212.2 175.3 L1214.8 161.5 L1221.2 177.4 L1227.5 184.3 L1233.4 188.5 L1236.0 174.2" fill="none" stroke="#3274d9" stroke-width="2.4" stroke-linejoin="round"/>
<path d="M556.5 190.7 L565.7 191.2 L575.2 194.4 L590.0 199.1 L596.4 195.4 L600.6 196.3 L603.3 199.7 L606.0 196.3 L611.2 196.0 L621.8 198.1 L638.8 201.3 L652.6 202.3 L655.2 198.6 L657.9 199.5 L662.1 197.5 L673.8 201.3 L685.9 202.3 L701.8 202.8 L729.4 204.4 L759.0 204.4 L763.3 196.5 L767.0 184.8 L770.7 188.0 L775.0 191.7 L777.6 167.9 L780.3 162.0 L782.9 176.3 L789.8 189.1 L801.9 192.8 L815.7 199.1 L822.0 191.7 L828.4 188.5 L834.2 179.0 L836.9 160.4 L841.1 185.9 L846.4 182.2 L860.2 191.2 L874.0 196.5 L879.3 190.1 L881.4 179.0 L886.2 189.1 L888.8 181.6 L893.1 185.9 L896.3 181.1 L898.4 187.0 L902.6 184.8 L905.8 187.0 L912.6 188.5 L931.7 196.5 L937.5 189.6 L942.8 198.6 L946.5 190.1 L950.8 188.0 L955.0 189.1 L957.1 180.1 L961.4 184.3 L976.2 194.4 L985.7 199.7 L995.3 187.0 L999.5 183.8 L1005.9 189.1 L1012.3 189.1 L1013.8 172.6 L1016.5 187.0 L1021.8 191.7 L1028.6 194.4 L1042.4 197.5 L1060.4 200.2 L1081.6 202.8 L1102.8 202.3 L1124.0 203.9 L1130.0 204.4 L1145.9 205.5 L1155.4 205.5 L1160.7 189.6 L1167.1 192.8 L1172.4 186.9 L1177.2 186.9 L1179.3 181.1 L1181.9 184.3 L1184.1 170.0 L1186.2 181.6 L1193.6 186.9 L1204.2 193.8 L1214.3 197.0 L1222.2 181.1 L1226.5 187.5 L1231.2 160.4 L1234.4 175.3 L1236.0 174.2" fill="none" stroke="#eab839" stroke-width="2.4" stroke-linejoin="round"/>
<path d="M556.5 185.0 L558.2 185.4 L560.9 187.5 L564.6 186.4 L569.9 189.1 L580.5 193.8 L589.0 196.0 L596.4 190.7 L600.6 191.2 L603.3 193.8 L608.1 189.1 L612.8 189.6 L617.6 193.8 L628.2 195.4 L638.8 197.5 L649.9 199.1 L654.7 193.3 L657.9 194.9 L662.1 193.8 L668.5 196.5 L675.3 199.1 L685.9 200.7 L701.8 200.9 L712.4 201.3 L729.4 203.4 L744.2 202.5 L759.0 202.3 L763.3 190.1 L768.6 175.3 L771.2 176.9 L773.4 185.9 L776.5 183.2 L780.3 174.2 L783.4 179.0 L791.3 186.4 L798.7 189.6 L807.2 193.8 L815.2 196.0 L821.0 189.1 L825.2 181.1 L829.5 183.8 L832.6 171.0 L838.0 166.3 L842.2 176.3 L846.4 175.8 L854.9 182.2 L864.4 188.0 L872.9 192.2 L877.2 184.8 L881.4 174.8 L885.1 180.6 L889.4 179.5 L891.5 175.3 L896.3 174.8 L900.5 180.1 L905.8 182.7 L910.5 184.8 L919.0 190.1 L929.0 194.4 L934.9 185.9 L938.6 183.2 L942.8 189.1 L950.2 177.9 L956.1 177.4 L963.5 180.6 L976.2 191.2 L985.7 195.4 L993.2 183.8 L1001.7 183.2 L1007.0 183.8 L1009.6 180.1 L1012.3 184.8 L1015.3 183.8 L1021.8 190.1 L1028.6 192.8 L1042.4 196.0 L1060.4 198.6 L1077.4 199.7 L1092.2 198.6 L1108.1 198.4 L1124.0 201.8 L1140.6 202.0 L1154.4 201.8 L1160.2 184.3 L1165.0 177.4 L1169.8 184.3 L1180.9 170.0 L1186.2 178.5 L1198.9 186.9 L1207.4 192.2 L1213.8 193.3 L1221.7 167.3 L1226.5 177.9 L1231.2 166.8 L1236.0 175.8" fill="none" stroke="#56a64b" stroke-width="2.4" stroke-linejoin="round"/>
</svg>
<div class="yl" style="left:500px;top:236.9px;width:50.8px">0</div>
<div class="yl" style="left:500px;top:214.1px;width:50.8px">250</div>
<div class="yl" style="left:500px;top:191.3px;width:50.8px">500</div>
<div class="yl" style="left:500px;top:168.4px;width:50.8px">750</div>
<div class="yl" style="left:500px;top:145.6px;width:50.8px">1000</div>
<div class="yl" style="left:500px;top:122.8px;width:50.8px">1250</div>
<div class="xl" style="left:536.3px;top:247.3px;width:40px;text-align:center">08/26</div>
<div class="xl" style="left:593.0px;top:247.3px;width:40px;text-align:center">08/27</div>
<div class="xl" style="left:649.7px;top:247.3px;width:40px;text-align:center">08/28</div>
<div class="xl" style="left:706.4px;top:247.3px;width:40px;text-align:center">08/29</div>
<div class="xl" style="left:763.1px;top:247.3px;width:40px;text-align:center">08/30</div>
<div class="xl" style="left:819.8px;top:247.3px;width:40px;text-align:center">08/31</div>
<div class="xl" style="left:876.5px;top:247.3px;width:40px;text-align:center">09/01</div>
<div class="xl" style="left:933.2px;top:247.3px;width:40px;text-align:center">09/02</div>
<div class="xl" style="left:989.9px;top:247.3px;width:40px;text-align:center">09/03</div>
<div class="xl" style="left:1046.6px;top:247.3px;width:40px;text-align:center">09/04</div>
<div class="xl" style="left:1103.3px;top:247.3px;width:40px;text-align:center">09/05</div>
<div class="xl" style="left:1160.0px;top:247.3px;width:40px;text-align:center">09/06</div>
<div class="xl" style="left:501px;top:184.2px;width:40px;text-align:center;transform:rotate(-90deg)">ppm</div>
<div class="a" style="left:523px;top:270px;width:11px;height:3px;border-radius:1px;background:#3274d9"></div>
<div class="lg" style="left:540px;top:265px">Logement_Test</div>
<div class="a" style="left:611px;top:270px;width:11px;height:3px;border-radius:1px;background:#eab839"></div>
<div class="lg" style="left:627px;top:265px">test open space</div>
<div class="a" style="left:701px;top:270px;width:11px;height:3px;border-radius:1px;background:#56a64b"></div>
<div class="lg" style="left:717px;top:265px">vert - salle 507</div>
<div class="pnl" style="left:509px;top:291px;width:750px;height:194px"></div>
<div class="ii" style="left:514px;top:292.5px">i</div>
<div class="ttl" style="left:780px;top:295.6px;width:203px">Humidity</div>
<svg class="a" style="left:509px;top:291px" width="744" height="193" viewBox="509 291 744 193">
<path d="M545.8 413.3H1236 M545.8 384.9H1236 M545.8 356.4H1236 M545.8 327.9H1236 M546.8 327.9V441.8 M604.2 327.9V441.8 M661.6 327.9V441.8 M718.9 327.9V441.8 M776.3 327.9V441.8 M833.7 327.9V441.8 M891.1 327.9V441.8 M948.5 327.9V441.8 M1005.8 327.9V441.8 M1063.2 327.9V441.8 M1120.6 327.9V441.8 M1178.0 327.9V441.8" stroke="#e9e9e9" stroke-width="1" fill="none"/>
<path d="M549.5 384.0 L550.8 382.4 L553.0 374.5 L555.6 371.8 L558.3 374.5 L560.4 375.5 L562.5 373.9 L571.5 369.2 L580.0 366.0 L584.2 363.3 L586.9 361.2 L590.1 363.9 L594.8 373.9 L599.1 385.6 L602.8 393.0 L605.4 394.6 L610.7 386.6 L612.8 376.6 L618.1 378.2 L621.9 380.3 L629.8 378.4 L635.1 377.6 L641.5 378.2 L646.8 373.9 L649.4 377.6 L651.5 375.0 L656.3 382.4 L659.0 396.2 L660.6 408.9 L663.7 413.7 L666.3 411.0 L671.1 403.6 L673.7 396.2 L680.1 391.9 L689.6 388.8 L698.1 387.7 L700.8 385.6 L703.9 380.8 L706.6 380.8 L709.2 386.6 L715.1 389.8 L718.8 394.6 L720.9 395.1 L724.6 391.4 L727.8 389.8 L730.4 385.6 L735.2 386.6 L739.4 385.8 L751.1 388.2 L754.8 384.5 L756.9 385.1 L761.2 390.9 L766.0 386.1 L771.3 387.7 L776.0 376.0 L778.7 383.5 L781.2 397.2 L784.4 401.5 L789.7 401.3 L795.0 395.7 L803.5 394.1 L809.9 391.4 L814.6 386.6 L821.5 387.7 L826.8 389.3 L830.0 394.1 L833.7 402.0 L840.6 403.6 L843.8 401.5 L847.5 395.7 L852.3 388.2 L867.1 386.1 L871.4 382.9 L876.7 384.0 L882.0 386.1 L891.5 388.2 L893.0 387.8 L896.2 394.1 L898.8 394.1 L904.7 382.5 L907.8 381.1 L913.1 382.5 L922.7 381.9 L926.9 378.8 L935.4 376.4 L944.9 377.2 L951.3 382.5 L955.5 392.0 L959.3 392.0 L963.0 384.6 L970.4 384.1 L975.2 386.7 L979.9 384.1 L985.2 378.2 L991.6 378.2 L996.9 376.6 L1001.1 375.1 L1005.4 377.2 L1010.1 376.6 L1013.2 361.8 L1020.1 365.5 L1022.8 364.5 L1030.2 363.4 L1037.6 361.3 L1046.1 361.3 L1049.3 359.7 L1054.1 361.8 L1056.2 356.0 L1062.0 359.7 L1070.5 365.5 L1074.2 363.4 L1080.0 365.0 L1085.3 368.2 L1093.8 370.8 L1100.2 372.9 L1104.4 369.8 L1107.1 375.6 L1111.3 376.6 L1121.4 385.7 L1128.2 388.1 L1133.0 384.4 L1135.6 374.8 L1139.8 353.6 L1143.0 349.4 L1147.3 349.9 L1153.6 354.2 L1156.8 352.8 L1159.5 357.3 L1164.2 359.5 L1166.9 363.7 L1169.5 364.8 L1175.9 369.5 L1180.7 367.4 L1182.8 347.3 L1185.4 338.3 L1190.7 342.5 L1196.0 345.1 L1200.3 349.9 L1206.6 353.1 L1209.8 355.7 L1214.0 355.2 L1217.2 357.3 L1224.7 358.9 L1233.1 360.0 L1235.8 358.9 L1235.8 441.8 L549.5 441.8 Z" fill="#3274d9" fill-opacity="0.1" stroke="none"/>
<path d="M547.5 382.5 L549.2 382.9 L555.6 385.1 L562.0 388.8 L568.3 389.8 L577.3 390.9 L580.0 375.0 L582.6 368.6 L586.3 367.0 L590.6 370.7 L595.9 378.2 L604.4 382.9 L612.8 385.6 L618.1 390.4 L625.6 391.9 L637.2 394.1 L642.5 388.8 L646.8 384.0 L652.1 383.5 L658.4 390.4 L661.6 391.9 L670.5 392.2 L675.8 396.2 L684.3 398.8 L693.9 399.9 L699.2 395.1 L706.6 390.9 L716.1 391.4 L721.4 391.7 L727.8 391.9 L734.1 397.2 L741.6 398.8 L751.1 398.3 L755.4 400.4 L759.6 397.2 L764.9 388.8 L769.1 387.7 L776.0 391.4 L778.7 388.8 L786.5 394.1 L792.9 399.9 L800.3 401.5 L807.7 401.5 L812.0 394.6 L819.4 388.8 L824.7 381.9 L828.4 383.5 L831.1 381.3 L837.4 387.7 L842.7 389.8 L849.1 394.6 L857.6 397.8 L867.1 396.2 L869.2 389.3 L877.2 381.9 L881.4 384.5 L884.1 383.5 L888.8 386.6 L891.5 385.4 L896.8 388.8 L903.6 392.5 L912.1 396.3 L921.6 397.8 L926.9 384.1 L934.9 377.2 L939.6 380.9 L943.9 382.5 L948.7 387.2 L952.4 385.7 L958.7 388.8 L967.2 395.7 L978.9 400.0 L982.0 380.9 L985.2 379.3 L988.9 381.9 L993.7 372.9 L996.4 375.6 L1001.1 370.3 L1006.4 377.7 L1009.0 378.8 L1015.4 382.5 L1020.7 387.2 L1030.2 388.8 L1051.4 389.4 L1072.6 389.9 L1104.4 391.0 L1115.0 392.5 L1125.0 394.4 L1140.9 395.5 L1146.2 396.2 L1153.6 395.0 L1156.8 374.3 L1160.0 375.4 L1167.4 383.3 L1173.8 386.5 L1178.5 381.7 L1187.5 386.5 L1192.8 391.3 L1201.3 391.8 L1209.3 393.4 L1214.0 375.9 L1218.8 372.7 L1222.5 377.5 L1231.0 380.7 L1235.8 384.4 L1235.8 441.8 L547.5 441.8 Z" fill="#eab839" fill-opacity="0.1" stroke="none"/>
<path d="M547.5 397.0 L549.2 396.2 L556.7 391.9 L566.2 390.9 L577.3 389.0 L581.0 384.0 L586.3 379.2 L591.6 381.3 L598.0 390.9 L606.0 396.2 L612.8 394.3 L627.7 392.5 L636.2 393.0 L646.8 389.0 L651.0 391.4 L657.4 400.4 L661.6 402.5 L671.6 400.4 L682.2 399.9 L692.8 399.9 L703.4 396.7 L708.7 398.8 L717.2 402.0 L727.8 398.3 L737.3 401.0 L745.8 402.5 L752.2 402.0 L756.9 404.1 L762.2 401.5 L769.1 405.2 L777.6 406.3 L785.5 403.1 L794.0 402.5 L805.6 403.6 L813.0 400.4 L824.7 397.2 L835.3 400.4 L842.7 397.2 L854.4 395.1 L862.9 396.2 L867.1 392.5 L872.4 395.1 L878.8 394.6 L888.3 399.9 L893.0 400.0 L901.5 397.8 L921.6 396.8 L926.9 390.4 L933.8 387.8 L939.6 394.7 L943.9 400.5 L956.6 398.4 L969.3 400.0 L979.9 400.5 L986.3 390.4 L993.7 391.0 L1001.1 388.8 L1008.6 392.5 L1017.5 390.4 L1035.5 389.4 L1041.9 386.2 L1050.3 386.2 L1055.6 391.5 L1058.8 392.5 L1067.3 391.3 L1083.2 390.6 L1089.6 391.5 L1094.9 393.4 L1100.2 391.3 L1105.5 391.5 L1110.8 397.8 L1117.1 404.7 L1121.4 405.8 L1125.0 404.0 L1132.4 400.8 L1145.1 399.2 L1153.6 396.0 L1160.0 389.9 L1164.2 391.3 L1175.9 404.0 L1182.2 400.3 L1188.6 395.5 L1199.2 392.8 L1209.8 390.7 L1217.2 384.9 L1224.1 391.3 L1228.4 392.3 L1235.8 399.2 L1235.8 441.8 L547.5 441.8 Z" fill="#56a64b" fill-opacity="0.1" stroke="none"/>
<path d="M549.5 384.0 L550.8 382.4 L553.0 374.5 L555.6 371.8 L558.3 374.5 L560.4 375.5 L562.5 373.9 L571.5 369.2 L580.0 366.0 L584.2 363.3 L586.9 361.2 L590.1 363.9 L594.8 373.9 L599.1 385.6 L602.8 393.0 L605.4 394.6 L610.7 386.6 L612.8 376.6 L618.1 378.2 L621.9 380.3 L629.8 378.4 L635.1 377.6 L641.5 378.2 L646.8 373.9 L649.4 377.6 L651.5 375.0 L656.3 382.4 L659.0 396.2 L660.6 408.9 L663.7 413.7 L666.3 411.0 L671.1 403.6 L673.7 396.2 L680.1 391.9 L689.6 388.8 L698.1 387.7 L700.8 385.6 L703.9 380.8 L706.6 380.8 L709.2 386.6 L715.1 389.8 L718.8 394.6 L720.9 395.1 L724.6 391.4 L727.8 389.8 L730.4 385.6 L735.2 386.6 L739.4 385.8 L751.1 388.2 L754.8 384.5 L756.9 385.1 L761.2 390.9 L766.0 386.1 L771.3 387.7 L776.0 376.0 L778.7 383.5 L781.2 397.2 L784.4 401.5 L789.7 401.3 L795.0 395.7 L803.5 394.1 L809.9 391.4 L814.6 386.6 L821.5 387.7 L826.8 389.3 L830.0 394.1 L833.7 402.0 L840.6 403.6 L843.8 401.5 L847.5 395.7 L852.3 388.2 L867.1 386.1 L871.4 382.9 L876.7 384.0 L882.0 386.1 L891.5 388.2 L893.0 387.8 L896.2 394.1 L898.8 394.1 L904.7 382.5 L907.8 381.1 L913.1 382.5 L922.7 381.9 L926.9 378.8 L935.4 376.4 L944.9 377.2 L951.3 382.5 L955.5 392.0 L959.3 392.0 L963.0 384.6 L970.4 384.1 L975.2 386.7 L979.9 384.1 L985.2 378.2 L991.6 378.2 L996.9 376.6 L1001.1 375.1 L1005.4 377.2 L1010.1 376.6 L1013.2 361.8 L1020.1 365.5 L1022.8 364.5 L1030.2 363.4 L1037.6 361.3 L1046.1 361.3 L1049.3 359.7 L1054.1 361.8 L1056.2 356.0 L1062.0 359.7 L1070.5 365.5 L1074.2 363.4 L1080.0 365.0 L1085.3 368.2 L1093.8 370.8 L1100.2 372.9 L1104.4 369.8 L1107.1 375.6 L1111.3 376.6 L1121.4 385.7 L1128.2 388.1 L1133.0 384.4 L1135.6 374.8 L1139.8 353.6 L1143.0 349.4 L1147.3 349.9 L1153.6 354.2 L1156.8 352.8 L1159.5 357.3 L1164.2 359.5 L1166.9 363.7 L1169.5 364.8 L1175.9 369.5 L1180.7 367.4 L1182.8 347.3 L1185.4 338.3 L1190.7 342.5 L1196.0 345.1 L1200.3 349.9 L1206.6 353.1 L1209.8 355.7 L1214.0 355.2 L1217.2 357.3 L1224.7 358.9 L1233.1 360.0 L1235.8 358.9" fill="none" stroke="#3274d9" stroke-width="2.4" stroke-linejoin="round"/>
<path d="M547.5 382.5 L549.2 382.9 L555.6 385.1 L562.0 388.8 L568.3 389.8 L577.3 390.9 L580.0 375.0 L582.6 368.6 L586.3 367.0 L590.6 370.7 L595.9 378.2 L604.4 382.9 L612.8 385.6 L618.1 390.4 L625.6 391.9 L637.2 394.1 L642.5 388.8 L646.8 384.0 L652.1 383.5 L658.4 390.4 L661.6 391.9 L670.5 392.2 L675.8 396.2 L684.3 398.8 L693.9 399.9 L699.2 395.1 L706.6 390.9 L716.1 391.4 L721.4 391.7 L727.8 391.9 L734.1 397.2 L741.6 398.8 L751.1 398.3 L755.4 400.4 L759.6 397.2 L764.9 388.8 L769.1 387.7 L776.0 391.4 L778.7 388.8 L786.5 394.1 L792.9 399.9 L800.3 401.5 L807.7 401.5 L812.0 394.6 L819.4 388.8 L824.7 381.9 L828.4 383.5 L831.1 381.3 L837.4 387.7 L842.7 389.8 L849.1 394.6 L857.6 397.8 L867.1 396.2 L869.2 389.3 L877.2 381.9 L881.4 384.5 L884.1 383.5 L888.8 386.6 L891.5 385.4 L896.8 388.8 L903.6 392.5 L912.1 396.3 L921.6 397.8 L926.9 384.1 L934.9 377.2 L939.6 380.9 L943.9 382.5 L948.7 387.2 L952.4 385.7 L958.7 388.8 L967.2 395.7 L978.9 400.0 L982.0 380.9 L985.2 379.3 L988.9 381.9 L993.7 372.9 L996.4 375.6 L1001.1 370.3 L1006.4 377.7 L1009.0 378.8 L1015.4 382.5 L1020.7 387.2 L1030.2 388.8 L1051.4 389.4 L1072.6 389.9 L1104.4 391.0 L1115.0 392.5 L1125.0 394.4 L1140.9 395.5 L1146.2 396.2 L1153.6 395.0 L1156.8 374.3 L1160.0 375.4 L1167.4 383.3 L1173.8 386.5 L1178.5 381.7 L1187.5 386.5 L1192.8 391.3 L1201.3 391.8 L1209.3 393.4 L1214.0 375.9 L1218.8 372.7 L1222.5 377.5 L1231.0 380.7 L1235.8 384.4" fill="none" stroke="#eab839" stroke-width="2.4" stroke-linejoin="round"/>
<path d="M547.5 397.0 L549.2 396.2 L556.7 391.9 L566.2 390.9 L577.3 389.0 L581.0 384.0 L586.3 379.2 L591.6 381.3 L598.0 390.9 L606.0 396.2 L612.8 394.3 L627.7 392.5 L636.2 393.0 L646.8 389.0 L651.0 391.4 L657.4 400.4 L661.6 402.5 L671.6 400.4 L682.2 399.9 L692.8 399.9 L703.4 396.7 L708.7 398.8 L717.2 402.0 L727.8 398.3 L737.3 401.0 L745.8 402.5 L752.2 402.0 L756.9 404.1 L762.2 401.5 L769.1 405.2 L777.6 406.3 L785.5 403.1 L794.0 402.5 L805.6 403.6 L813.0 400.4 L824.7 397.2 L835.3 400.4 L842.7 397.2 L854.4 395.1 L862.9 396.2 L867.1 392.5 L872.4 395.1 L878.8 394.6 L888.3 399.9 L893.0 400.0 L901.5 397.8 L921.6 396.8 L926.9 390.4 L933.8 387.8 L939.6 394.7 L943.9 400.5 L956.6 398.4 L969.3 400.0 L979.9 400.5 L986.3 390.4 L993.7 391.0 L1001.1 388.8 L1008.6 392.5 L1017.5 390.4 L1035.5 389.4 L1041.9 386.2 L1050.3 386.2 L1055.6 391.5 L1058.8 392.5 L1067.3 391.3 L1083.2 390.6 L1089.6 391.5 L1094.9 393.4 L1100.2 391.3 L1105.5 391.5 L1110.8 397.8 L1117.1 404.7 L1121.4 405.8 L1125.0 404.0 L1132.4 400.8 L1145.1 399.2 L1153.6 396.0 L1160.0 389.9 L1164.2 391.3 L1175.9 404.0 L1182.2 400.3 L1188.6 395.5 L1199.2 392.8 L1209.8 390.7 L1217.2 384.9 L1224.1 391.3 L1228.4 392.3 L1235.8 399.2" fill="none" stroke="#56a64b" stroke-width="2.4" stroke-linejoin="round"/>
</svg>
<div class="yl" style="left:500px;top:436.4px;width:41.3px">30</div>
<div class="yl" style="left:500px;top:407.9px;width:41.3px">40</div>
<div class="yl" style="left:500px;top:379.5px;width:41.3px">50</div>
<div class="yl" style="left:500px;top:351.0px;width:41.3px">60</div>
<div class="yl" style="left:500px;top:322.5px;width:41.3px">70</div>
<div class="xl" style="left:526.8px;top:446.8px;width:40px;text-align:center">08/26</div>
<div class="xl" style="left:584.2px;top:446.8px;width:40px;text-align:center">08/27</div>
<div class="xl" style="left:641.6px;top:446.8px;width:40px;text-align:center">08/28</div>
<div class="xl" style="left:698.9px;top:446.8px;width:40px;text-align:center">08/29</div>
<div class="xl" style="left:756.3px;top:446.8px;width:40px;text-align:center">08/30</div>
<div class="xl" style="left:813.7px;top:446.8px;width:40px;text-align:center">08/31</div>
<div class="xl" style="left:871.1px;top:446.8px;width:40px;text-align:center">09/01</div>
<div class="xl" style="left:928.5px;top:446.8px;width:40px;text-align:center">09/02</div>
<div class="xl" style="left:985.8px;top:446.8px;width:40px;text-align:center">09/03</div>
<div class="xl" style="left:1043.2px;top:446.8px;width:40px;text-align:center">09/04</div>
<div class="xl" style="left:1100.6px;top:446.8px;width:40px;text-align:center">09/05</div>
<div class="xl" style="left:1158.0px;top:446.8px;width:40px;text-align:center">09/06</div>
<div class="xl" style="left:501px;top:383.9px;width:40px;text-align:center;transform:rotate(-90deg)">H%</div>
<div class="a" style="left:523px;top:470px;width:11px;height:3px;border-radius:1px;background:#3274d9"></div>
<div class="lg" style="left:540px;top:465px">Logement_Test</div>
<div class="a" style="left:611px;top:470px;width:11px;height:3px;border-radius:1px;background:#eab839"></div>
<div class="lg" style="left:627px;top:465px">test open space</div>
<div class="a" style="left:701px;top:470px;width:11px;height:3px;border-radius:1px;background:#56a64b"></div>
<div class="lg" style="left:717px;top:465px">vert - salle 507</div>
<div class="pnl" style="left:509px;top:491px;width:750px;height:195px"></div>
<div class="ii" style="left:514px;top:492.5px">i</div>
<div class="ttl" style="left:780px;top:495.6px;width:203px">Temperature</div>
<svg class="a" style="left:509px;top:491px" width="744" height="193" viewBox="509 491 744 193">
<path d="M545.8 619.9H1236 M545.8 597.0H1236 M545.8 574.2H1236 M545.8 551.3H1236 M545.8 528.5H1236 M546.8 528.5V642.7 M604.2 528.5V642.7 M661.6 528.5V642.7 M718.9 528.5V642.7 M776.3 528.5V642.7 M833.7 528.5V642.7 M891.1 528.5V642.7 M948.5 528.5V642.7 M1005.8 528.5V642.7 M1063.2 528.5V642.7 M1120.6 528.5V642.7 M1178.0 528.5V642.7" stroke="#e9e9e9" stroke-width="1" fill="none"/>
<path d="M547.8 577.5 L548.7 578.4 L551.4 581.6 L554.5 588.5 L557.7 589.5 L563.0 595.4 L572.6 603.8 L583.7 609.7 L589.5 602.8 L591.6 604.9 L594.8 600.1 L600.1 591.1 L604.4 594.3 L610.7 598.0 L618.1 596.4 L628.7 604.4 L643.6 613.9 L647.8 610.7 L653.1 598.0 L659.0 582.6 L661.6 583.2 L665.8 592.2 L670.5 598.5 L675.3 594.3 L680.1 601.2 L694.9 613.9 L698.1 613.4 L704.5 617.6 L710.8 604.4 L716.1 595.9 L718.8 586.9 L722.5 590.6 L728.3 600.1 L733.1 600.1 L737.3 604.4 L752.2 615.0 L756.4 612.3 L761.7 615.0 L768.1 595.9 L771.3 593.2 L774.4 593.8 L777.0 589.5 L780.7 583.7 L784.4 597.0 L790.3 610.7 L795.0 606.0 L812.0 612.3 L816.2 607.5 L821.5 608.1 L826.3 602.8 L833.2 580.0 L836.4 582.1 L838.5 581.6 L843.8 591.6 L851.2 594.3 L867.1 607.0 L875.6 611.3 L882.0 608.6 L888.3 602.8 L891.5 600.7 L896.2 598.0 L903.1 604.4 L906.8 599.6 L914.2 602.8 L922.7 608.1 L926.4 608.6 L930.1 612.3 L935.4 611.8 L943.9 602.8 L949.2 598.5 L954.0 597.2 L957.7 602.8 L963.0 598.0 L971.4 602.2 L979.9 606.5 L988.4 606.0 L993.7 609.9 L999.0 610.7 L1004.3 606.5 L1008.6 600.1 L1013.2 602.9 L1017.9 599.4 L1020.9 601.7 L1024.5 607.7 L1032.8 613.1 L1041.8 617.2 L1044.8 613.1 L1049.5 614.9 L1056.7 608.9 L1063.8 602.3 L1067.4 604.7 L1073.4 615.5 L1078.1 606.5 L1082.9 608.3 L1097.2 620.8 L1104.4 620.2 L1106.7 620.8 L1113.9 607.7 L1121.0 594.6 L1128.6 597.6 L1133.3 595.8 L1136.9 599.4 L1141.7 605.3 L1144.7 604.7 L1157.2 611.3 L1161.9 609.5 L1166.7 608.9 L1170.3 605.3 L1176.3 594.0 L1181.0 590.4 L1184.0 593.4 L1185.8 604.1 L1188.2 617.8 L1194.1 605.3 L1198.9 606.5 L1212.0 616.6 L1215.6 614.3 L1220.4 618.4 L1225.1 617.8 L1232.3 611.3 L1235.8 607.1 L1235.8 642.7 L547.8 642.7 Z" fill="#3274d9" fill-opacity="0.1" stroke="none"/>
<path d="M547.8 611.5 L548.7 610.7 L551.4 604.9 L555.6 600.7 L559.8 590.6 L564.1 585.8 L576.8 584.0 L580.0 594.8 L583.7 612.8 L590.6 615.0 L594.3 616.2 L599.1 612.8 L606.0 612.3 L610.7 603.3 L613.9 601.7 L618.1 591.6 L623.4 587.4 L636.2 587.9 L640.4 599.1 L644.7 605.4 L650.0 604.4 L658.4 593.2 L661.6 590.1 L666.3 591.1 L671.1 594.3 L675.8 584.8 L680.1 582.3 L690.7 583.2 L695.5 590.6 L699.2 600.1 L705.5 603.8 L711.9 597.5 L719.3 593.2 L724.6 593.8 L728.8 594.8 L734.1 584.2 L741.6 580.0 L749.0 578.4 L753.2 594.8 L754.3 606.0 L759.6 612.3 L764.4 618.1 L768.1 620.3 L773.9 599.6 L778.6 609.1 L781.2 595.9 L786.0 593.2 L789.7 584.2 L796.1 581.6 L805.6 581.6 L808.8 585.8 L812.0 604.9 L816.8 612.8 L820.5 612.8 L824.2 618.7 L829.0 614.4 L831.6 615.0 L838.0 601.7 L843.8 596.4 L850.1 584.2 L859.7 582.1 L865.0 583.2 L868.2 595.9 L870.3 608.6 L874.0 618.1 L878.8 612.8 L882.0 611.3 L884.1 616.6 L888.3 608.6 L891.0 615.0 L896.2 601.7 L900.4 598.0 L903.6 591.6 L910.0 584.8 L919.5 582.6 L923.2 584.8 L925.9 595.9 L926.9 606.5 L932.2 611.8 L935.4 618.1 L939.6 624.0 L946.5 610.2 L948.1 610.7 L950.8 619.2 L954.5 603.8 L958.7 599.1 L963.0 589.5 L969.3 583.7 L979.9 584.2 L982.0 601.2 L984.2 608.6 L988.4 611.8 L992.7 615.5 L996.4 614.4 L1003.3 619.2 L1006.4 611.8 L1009.6 607.0 L1013.8 600.6 L1019.7 588.6 L1032.8 582.7 L1038.8 582.1 L1056.7 576.7 L1073.4 572.9 L1092.4 573.1 L1109.1 573.7 L1116.3 569.6 L1125.0 566.2 L1129.8 564.8 L1142.9 565.4 L1152.4 566.6 L1156.0 579.1 L1156.6 605.3 L1160.2 607.7 L1166.7 622.6 L1172.7 620.2 L1181.0 615.5 L1183.4 601.7 L1187.6 592.2 L1191.7 580.9 L1198.9 576.1 L1207.2 573.1 L1210.8 575.5 L1214.4 602.3 L1219.2 613.7 L1223.9 608.3 L1228.7 607.7 L1233.5 602.3 L1235.8 605.3 L1235.8 642.7 L547.8 642.7 Z" fill="#eab839" fill-opacity="0.1" stroke="none"/>
<path d="M547.8 582.3 L548.7 582.6 L555.6 585.8 L560.9 584.4 L576.8 585.1 L583.2 592.2 L590.6 592.7 L598.0 582.1 L601.2 580.5 L608.6 583.2 L613.4 587.4 L619.2 585.3 L635.1 587.4 L640.4 593.2 L645.7 593.8 L650.0 585.3 L655.2 569.9 L659.5 565.7 L661.0 566.2 L665.2 569.9 L670.5 578.4 L675.8 578.9 L690.7 583.2 L697.0 590.1 L701.3 591.6 L704.5 590.1 L708.7 578.4 L716.1 571.0 L721.4 573.1 L727.8 582.1 L732.0 581.0 L747.9 582.6 L753.2 587.9 L759.6 591.6 L764.9 587.4 L773.4 567.3 L776.6 566.2 L781.2 570.4 L785.5 575.7 L794.0 577.9 L805.6 580.5 L814.1 590.1 L819.4 590.8 L824.7 589.5 L833.2 577.3 L837.4 579.5 L843.3 582.1 L849.1 581.0 L865.0 583.7 L869.2 587.9 L875.6 591.1 L880.9 587.4 L886.2 575.7 L891.5 578.9 L896.2 578.9 L901.0 583.7 L904.7 582.1 L921.6 584.2 L924.8 589.0 L930.1 593.2 L935.4 589.5 L939.6 578.9 L943.9 571.0 L948.1 574.2 L953.4 576.3 L958.2 581.6 L963.0 580.0 L978.9 582.6 L983.1 587.9 L991.6 591.6 L994.8 590.8 L1000.1 590.1 L1003.8 584.2 L1008.6 581.6 L1016.2 585.1 L1032.8 585.1 L1037.6 586.3 L1042.4 590.1 L1048.3 588.0 L1056.7 567.8 L1059.1 567.2 L1061.4 570.2 L1067.4 572.5 L1073.4 577.9 L1078.1 577.3 L1093.6 582.1 L1099.6 586.8 L1104.4 586.3 L1109.1 571.9 L1115.1 548.1 L1120.4 542.7 L1124.0 549.3 L1129.8 563.6 L1139.3 567.2 L1152.4 571.4 L1157.2 577.3 L1164.3 580.3 L1170.3 575.5 L1177.4 563.0 L1181.0 564.2 L1188.2 574.9 L1208.4 576.7 L1215.6 584.5 L1221.5 577.3 L1226.3 580.3 L1232.3 566.6 L1235.8 567.8 L1235.8 642.7 L547.8 642.7 Z" fill="#56a64b" fill-opacity="0.1" stroke="none"/>
<path d="M546.8 551.3H1236" stroke="#8c1a42" stroke-width="2"/>
<path d="M546.8 562.8H1236" stroke="#a8246e" stroke-width="2"/>
<path d="M546.8 574.2H1236" stroke="#f43a3a" stroke-width="2"/>
<path d="M546.8 585.6H1236" stroke="#ff8a18" stroke-width="2"/>
<path d="M546.8 597.0H1236" stroke="#ecec2c" stroke-width="2"/>
<path d="M547.8 577.5 L548.7 578.4 L551.4 581.6 L554.5 588.5 L557.7 589.5 L563.0 595.4 L572.6 603.8 L583.7 609.7 L589.5 602.8 L591.6 604.9 L594.8 600.1 L600.1 591.1 L604.4 594.3 L610.7 598.0 L618.1 596.4 L628.7 604.4 L643.6 613.9 L647.8 610.7 L653.1 598.0 L659.0 582.6 L661.6 583.2 L665.8 592.2 L670.5 598.5 L675.3 594.3 L680.1 601.2 L694.9 613.9 L698.1 613.4 L704.5 617.6 L710.8 604.4 L716.1 595.9 L718.8 586.9 L722.5 590.6 L728.3 600.1 L733.1 600.1 L737.3 604.4 L752.2 615.0 L756.4 612.3 L761.7 615.0 L768.1 595.9 L771.3 593.2 L774.4 593.8 L777.0 589.5 L780.7 583.7 L784.4 597.0 L790.3 610.7 L795.0 606.0 L812.0 612.3 L816.2 607.5 L821.5 608.1 L826.3 602.8 L833.2 580.0 L836.4 582.1 L838.5 581.6 L843.8 591.6 L851.2 594.3 L867.1 607.0 L875.6 611.3 L882.0 608.6 L888.3 602.8 L891.5 600.7 L896.2 598.0 L903.1 604.4 L906.8 599.6 L914.2 602.8 L922.7 608.1 L926.4 608.6 L930.1 612.3 L935.4 611.8 L943.9 602.8 L949.2 598.5 L954.0 597.2 L957.7 602.8 L963.0 598.0 L971.4 602.2 L979.9 606.5 L988.4 606.0 L993.7 609.9 L999.0 610.7 L1004.3 606.5 L1008.6 600.1 L1013.2 602.9 L1017.9 599.4 L1020.9 601.7 L1024.5 607.7 L1032.8 613.1 L1041.8 617.2 L1044.8 613.1 L1049.5 614.9 L1056.7 608.9 L1063.8 602.3 L1067.4 604.7 L1073.4 615.5 L1078.1 606.5 L1082.9 608.3 L1097.2 620.8 L1104.4 620.2 L1106.7 620.8 L1113.9 607.7 L1121.0 594.6 L1128.6 597.6 L1133.3 595.8 L1136.9 599.4 L1141.7 605.3 L1144.7 604.7 L1157.2 611.3 L1161.9 609.5 L1166.7 608.9 L1170.3 605.3 L1176.3 594.0 L1181.0 590.4 L1184.0 593.4 L1185.8 604.1 L1188.2 617.8 L1194.1 605.3 L1198.9 606.5 L1212.0 616.6 L1215.6 614.3 L1220.4 618.4 L1225.1 617.8 L1232.3 611.3 L1235.8 607.1" fill="none" stroke="#3274d9" stroke-width="2.4" stroke-linejoin="round"/>
<path d="M547.8 611.5 L548.7 610.7 L551.4 604.9 L555.6 600.7 L559.8 590.6 L564.1 585.8 L576.8 584.0 L580.0 594.8 L583.7 612.8 L590.6 615.0 L594.3 616.2 L599.1 612.8 L606.0 612.3 L610.7 603.3 L613.9 601.7 L618.1 591.6 L623.4 587.4 L636.2 587.9 L640.4 599.1 L644.7 605.4 L650.0 604.4 L658.4 593.2 L661.6 590.1 L666.3 591.1 L671.1 594.3 L675.8 584.8 L680.1 582.3 L690.7 583.2 L695.5 590.6 L699.2 600.1 L705.5 603.8 L711.9 597.5 L719.3 593.2 L724.6 593.8 L728.8 594.8 L734.1 584.2 L741.6 580.0 L749.0 578.4 L753.2 594.8 L754.3 606.0 L759.6 612.3 L764.4 618.1 L768.1 620.3 L773.9 599.6 L778.6 609.1 L781.2 595.9 L786.0 593.2 L789.7 584.2 L796.1 581.6 L805.6 581.6 L808.8 585.8 L812.0 604.9 L816.8 612.8 L820.5 612.8 L824.2 618.7 L829.0 614.4 L831.6 615.0 L838.0 601.7 L843.8 596.4 L850.1 584.2 L859.7 582.1 L865.0 583.2 L868.2 595.9 L870.3 608.6 L874.0 618.1 L878.8 612.8 L882.0 611.3 L884.1 616.6 L888.3 608.6 L891.0 615.0 L896.2 601.7 L900.4 598.0 L903.6 591.6 L910.0 584.8 L919.5 582.6 L923.2 584.8 L925.9 595.9 L926.9 606.5 L932.2 611.8 L935.4 618.1 L939.6 624.0 L946.5 610.2 L948.1 610.7 L950.8 619.2 L954.5 603.8 L958.7 599.1 L963.0 589.5 L969.3 583.7 L979.9 584.2 L982.0 601.2 L984.2 608.6 L988.4 611.8 L992.7 615.5 L996.4 614.4 L1003.3 619.2 L1006.4 611.8 L1009.6 607.0 L1013.8 600.6 L1019.7 588.6 L1032.8 582.7 L1038.8 582.1 L1056.7 576.7 L1073.4 572.9 L1092.4 573.1 L1109.1 573.7 L1116.3 569.6 L1125.0 566.2 L1129.8 564.8 L1142.9 565.4 L1152.4 566.6 L1156.0 579.1 L1156.6 605.3 L1160.2 607.7 L1166.7 622.6 L1172.7 620.2 L1181.0 615.5 L1183.4 601.7 L1187.6 592.2 L1191.7 580.9 L1198.9 576.1 L1207.2 573.1 L1210.8 575.5 L1214.4 602.3 L1219.2 613.7 L1223.9 608.3 L1228.7 607.7 L1233.5 602.3 L1235.8 605.3" fill="none" stroke="#eab839" stroke-width="2.4" stroke-linejoin="round"/>
<path d="M547.8 582.3 L548.7 582.6 L555.6 585.8 L560.9 584.4 L576.8 585.1 L583.2 592.2 L590.6 592.7 L598.0 582.1 L601.2 580.5 L608.6 583.2 L613.4 587.4 L619.2 585.3 L635.1 587.4 L640.4 593.2 L645.7 593.8 L650.0 585.3 L655.2 569.9 L659.5 565.7 L661.0 566.2 L665.2 569.9 L670.5 578.4 L675.8 578.9 L690.7 583.2 L697.0 590.1 L701.3 591.6 L704.5 590.1 L708.7 578.4 L716.1 571.0 L721.4 573.1 L727.8 582.1 L732.0 581.0 L747.9 582.6 L753.2 587.9 L759.6 591.6 L764.9 587.4 L773.4 567.3 L776.6 566.2 L781.2 570.4 L785.5 575.7 L794.0 577.9 L805.6 580.5 L814.1 590.1 L819.4 590.8 L824.7 589.5 L833.2 577.3 L837.4 579.5 L843.3 582.1 L849.1 581.0 L865.0 583.7 L869.2 587.9 L875.6 591.1 L880.9 587.4 L886.2 575.7 L891.5 578.9 L896.2 578.9 L901.0 583.7 L904.7 582.1 L921.6 584.2 L924.8 589.0 L930.1 593.2 L935.4 589.5 L939.6 578.9 L943.9 571.0 L948.1 574.2 L953.4 576.3 L958.2 581.6 L963.0 580.0 L978.9 582.6 L983.1 587.9 L991.6 591.6 L994.8 590.8 L1000.1 590.1 L1003.8 584.2 L1008.6 581.6 L1016.2 585.1 L1032.8 585.1 L1037.6 586.3 L1042.4 590.1 L1048.3 588.0 L1056.7 567.8 L1059.1 567.2 L1061.4 570.2 L1067.4 572.5 L1073.4 577.9 L1078.1 577.3 L1093.6 582.1 L1099.6 586.8 L1104.4 586.3 L1109.1 571.9 L1115.1 548.1 L1120.4 542.7 L1124.0 549.3 L1129.8 563.6 L1139.3 567.2 L1152.4 571.4 L1157.2 577.3 L1164.3 580.3 L1170.3 575.5 L1177.4 563.0 L1181.0 564.2 L1188.2 574.9 L1208.4 576.7 L1215.6 584.5 L1221.5 577.3 L1226.3 580.3 L1232.3 566.6 L1235.8 567.8" fill="none" stroke="#56a64b" stroke-width="2.4" stroke-linejoin="round"/>
</svg>
<div class="yl" style="left:500px;top:637.3px;width:41.3px">22</div>
<div class="yl" style="left:500px;top:614.5px;width:41.3px">24</div>
<div class="yl" style="left:500px;top:591.6px;width:41.3px">26</div>
<div class="yl" style="left:500px;top:568.8px;width:41.3px">28</div>
<div class="yl" style="left:500px;top:545.9px;width:41.3px">30</div>
<div class="yl" style="left:500px;top:523.1px;width:41.3px">32</div>
<div class="xl" style="left:526.8px;top:647.7px;width:40px;text-align:center">08/26</div>
<div class="xl" style="left:584.2px;top:647.7px;width:40px;text-align:center">08/27</div>
<div class="xl" style="left:641.6px;top:647.7px;width:40px;text-align:center">08/28</div>
<div class="xl" style="left:698.9px;top:647.7px;width:40px;text-align:center">08/29</div>
<div class="xl" style="left:756.3px;top:647.7px;width:40px;text-align:center">08/30</div>
<div class="xl" style="left:813.7px;top:647.7px;width:40px;text-align:center">08/31</div>
<div class="xl" style="left:871.1px;top:647.7px;width:40px;text-align:center">09/01</div>
<div class="xl" style="left:928.5px;top:647.7px;width:40px;text-align:center">09/02</div>
<div class="xl" style="left:985.8px;top:647.7px;width:40px;text-align:center">09/03</div>
<div class="xl" style="left:1043.2px;top:647.7px;width:40px;text-align:center">09/04</div>
<div class="xl" style="left:1100.6px;top:647.7px;width:40px;text-align:center">09/05</div>
<div class="xl" style="left:1158.0px;top:647.7px;width:40px;text-align:center">09/06</div>
<div class="xl" style="left:501px;top:584.6px;width:40px;text-align:center;transform:rotate(-90deg)">°C</div>
<div class="a" style="left:523px;top:670px;width:11px;height:3px;border-radius:1px;background:#3274d9"></div>
<div class="lg" style="left:540px;top:665px">Logement_Test</div>
<div class="a" style="left:611px;top:670px;width:11px;height:3px;border-radius:1px;background:#eab839"></div>
<div class="lg" style="left:627px;top:665px">test open space</div>
<div class="a" style="left:701px;top:670px;width:11px;height:3px;border-radius:1px;background:#56a64b"></div>
<div class="lg" style="left:717px;top:665px">vert - salle 507</div>
<!-- /CHARTS -->
<!-- black frame -->
<div class="blk" style="left:0;top:0;width:1284px;height:9px"></div>
<div class="blk" style="left:0;top:0;width:9px;height:755px"></div>
<div class="blk" style="left:1253px;top:0;width:31px;height:755px"></div>
<div class="blk" style="left:0;top:729px;width:1284px;height:26px"></div>
</body></html>
